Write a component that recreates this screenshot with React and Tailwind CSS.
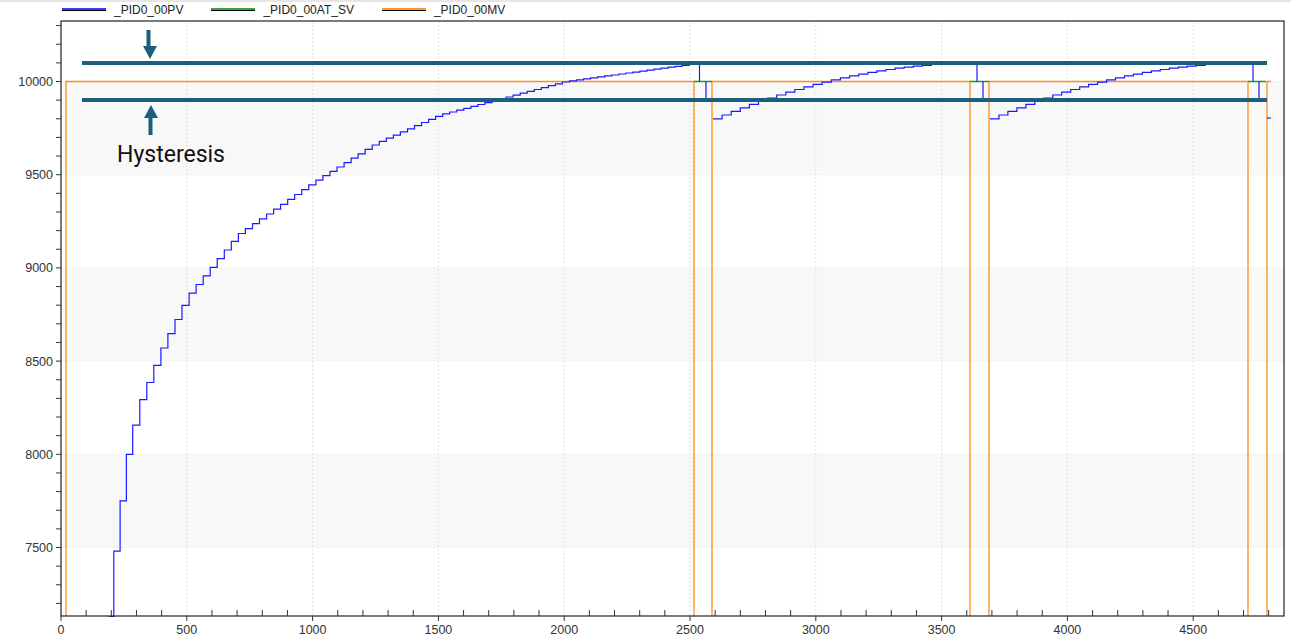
import React from "react";

const X0 = 61, PX = 0.2516;
const yOf = (v) => 81.5 + (10000 - v) * (93.2 / 500);
const xOf = (t) => X0 + t * PX;

function stepPath(pts) {
  let d = `M${pts[0][0].toFixed(1)},${pts[0][1].toFixed(1)}`;
  for (let i = 1; i < pts.length; i++) {
    d += ` H${pts[i][0].toFixed(1)} V${pts[i][1].toFixed(1)}`;
  }
  return d;
}

const anchors = [[190,7130],[210,7480],[235,7750],[260,8000],[300,8250],[400,8580],[500,8850],[700,9180],[1000,9460],[1250,9670],[1500,9820],[2000,10000],[2540,10100]];
function interp(t) {
  for (let i = 0; i < anchors.length - 1; i++) {
    const [t0, v0] = anchors[i], [t1, v1] = anchors[i + 1];
    if (t <= t1) return v0 + (v1 - v0) * (t - t0) / (t1 - t0);
  }
  return anchors[anchors.length - 1][1];
}
function firstRise() {
  const pts = [[xOf(190), yOf(7130)], [xOf(200), yOf(7130)], [xOf(210), yOf(7480)], [xOf(235), yOf(7750)], [xOf(260), yOf(8000)]];
  for (let t = 285; t <= 2540; t += 28) pts.push([xOf(t), yOf(interp(t))]);
  pts.push([699, yOf(10100)]);
  return stepPath(pts);
}
function rise(xs, xe) {
  const pts = [];
  const n = Math.round((xe - xs) / 9);
  for (let i = 0; i <= n; i++) {
    const u = i / n;
    const v = 9800 + 300 * (1 - (1 - u) * (1 - u));
    pts.push([xs + (xe - xs) * u, yOf(v)]);
  }
  return stepPath(pts);
}

export default function App() {
  const yTop = 21, yBot = 616, xR = 1284;
  const bands = [[10000, 9500], [9000, 8500], [8000, 7500]];
  const yLabels = [10000, 9500, 9000, 8500, 8000, 7500];
  const minorY = [];
  for (let v = 7200; v <= 10300; v += 100) minorY.push(v);
  const xTicks = [];
  for (let t = 0; t <= 4900; t += 100) if (xOf(t) < xR) xTicks.push(t);
  const blue = "#1a1aff", orange = "#ff8c1a", teal = "#1b5e7d";
  return (
    <div className="w-[1291px] h-[638px] bg-white relative overflow-hidden" style={{ fontFamily: "Liberation Sans, Arial, sans-serif" }}>
      <div className="h-[2px] bg-[#e6e6e6]" />
      <div className="flex items-center h-[15px] pl-[62px] gap-[8px] text-[12px] text-[#222]">
        <LegendItem color="#3b3bff" label="_PID0_00PV" />
        <LegendItem color="#3aa33a" label="_PID0_00AT_SV" />
        <LegendItem color="#ff9a2e" label="_PID0_00MV" />
      </div>
      <svg className="absolute left-0 top-0" width="1291" height="638">
        {bands.map(([a, b]) => (
          <rect key={a} x={X0} y={yOf(a)} width={xR - X0} height={yOf(b) - yOf(a)} fill="#f8f8f8" />
        ))}
        {[500,1000,1500,2000,2500,3000,3500,4000,4500].map((t) => (
          <line key={t} x1={xOf(t)} x2={xOf(t)} y1={yTop} y2={yBot} stroke="#e2e2e2" strokeDasharray="2 2" />
        ))}
        {yLabels.map((v) => (
          <line key={v} x1={X0} x2={xR} y1={yOf(v)} y2={yOf(v)} stroke="#ececec" strokeDasharray="2 2" />
        ))}
        <path d={`M66,${yBot} V81.5 H694 V${yBot} M712,${yBot} V81.5 H970 V${yBot} M989,${yBot} V81.5 H1248 V${yBot} M1267,${yBot} V81.5 H1271`} fill="none" stroke={orange} strokeWidth="1.3" />
        <path d="M694,81.5 H712 M970,81.5 H989 M1248,81.5 H1266" stroke="#1f9a1f" strokeWidth="1.3" />
        <path d={firstRise()} fill="none" stroke={blue} strokeWidth="1.2" />
        <path d={`M699.5,63 V81.5 M706,81.5 V100`} fill="none" stroke={blue} strokeWidth="1.2" />
        <path d={rise(713, 977)} fill="none" stroke={blue} strokeWidth="1.2" />
        <path d={`M977,63 V81.5 M983,81.5 V100`} fill="none" stroke={blue} strokeWidth="1.2" />
        <path d={rise(990, 1250)} fill="none" stroke={blue} strokeWidth="1.2" />
        <path d={`M1253,63 V81.5 M1259,81.5 V100 H1262`} fill="none" stroke={blue} strokeWidth="1.2" />
        <path d={`M1267,118 H1271`} stroke={blue} strokeWidth="1.2" />
        <line x1="82" x2="1267" y1="63" y2="63" stroke={teal} strokeWidth="4" />
        <line x1="82" x2="1267" y1="100" y2="100" stroke={teal} strokeWidth="4" />
        <path d="M148.5,30 V47" stroke={teal} strokeWidth="4" />
        <path d="M143,46 H157 L150,59 Z" fill={teal} />
        <path d="M150.5,117 V135" stroke={teal} strokeWidth="4" />
        <path d="M144,118 H158 L151,105 Z" fill={teal} />
        <text x="117" y="162" fontSize="23" fill="#111" fontFamily="Roboto, Liberation Sans, sans-serif">Hysteresis</text>
        <rect x={X0} y={yTop} width={xR - X0} height={yBot - yTop} fill="none" stroke="#222" strokeWidth="1.2" />
        {minorY.map((v) => yOf(v) > yTop && yOf(v) < yBot && (
          <line key={v} x1={X0 - 5} x2={X0} y1={yOf(v)} y2={yOf(v)} stroke="#333" />
        ))}
        {yLabels.map((v) => (
          <text key={v} x={X0 - 8} y={yOf(v) + 4.5} fontSize="12.5" textAnchor="end" fill="#333">{v}</text>
        ))}
        {xTicks.map((t) => (
          <line key={t} x1={xOf(t)} x2={xOf(t)} y1={t % 500 === 0 ? yBot + 5 : yBot - 6} y2={yBot} stroke="#333" />
        ))}
        {[0,500,1000,1500,2000,2500,3000,3500,4000,4500].map((t) => (
          <text key={t} x={xOf(t)} y={yBot + 18} fontSize="12.5" textAnchor="middle" fill="#333">{t}</text>
        ))}
      </svg>
    </div>
  );
}

function LegendItem({ color, label }) {
  return (
    <div className="flex items-center gap-[8px] mr-[20px]">
      <div className="w-[44px] flex flex-col">
        <div className="h-[2px]" style={{ background: color }} />
        <div className="h-[1px] bg-black" />
      </div>
      <span>{label}</span>
    </div>
  );
}
